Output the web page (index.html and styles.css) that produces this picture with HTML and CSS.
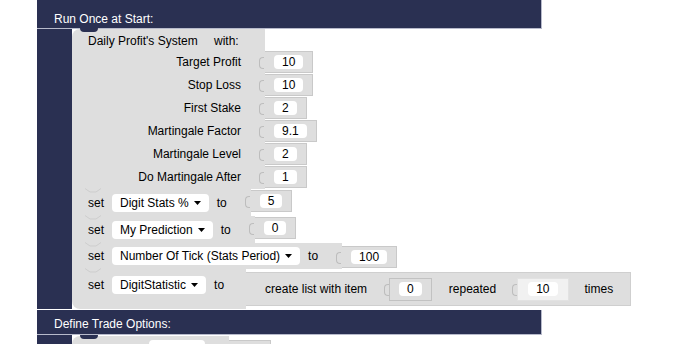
FILE: index.html
```
<!DOCTYPE html>
<html>
<head>
<meta charset="utf-8">
<link rel="stylesheet" href="styles.css">
</head>
<body>
<div class="ws">
  <div class="hat"><span class="hat-text">Run Once at Start:</span></div>
  <div class="mouth">
    <div class="spine"></div>
    <div class="stack">
      <div class="proc">
        <span class="bump"></span>
        <div class="proc-head">Daily Profit's System <span class="with">with:</span></div>
        <div class="arg"><div class="lbl">Target Profit</div><div class="val"><span class="fld">10</span></div></div>
        <div class="arg"><div class="lbl">Stop Loss</div><div class="val"><span class="fld">10</span></div></div>
        <div class="arg"><div class="lbl">First Stake</div><div class="val"><span class="fld">2</span></div></div>
        <div class="arg"><div class="lbl">Martingale Factor</div><div class="val"><span class="fld">9.1</span></div></div>
        <div class="arg"><div class="lbl">Martingale Level</div><div class="val"><span class="fld">2</span></div></div>
        <div class="arg"><div class="lbl">Do Martingale After</div><div class="val"><span class="fld">1</span></div></div>
      </div>

      <div class="set">
        <svg class="notch" width="16" height="5" viewBox="0 0 16 5"><polyline points="0,0.5 5,4 11,4 16,0.5" fill="none" stroke="#cdcdcd" stroke-width="1"/></svg>
        <div class="set-body">
          <span>set</span>
          <span class="pill">Digit Stats %<svg class="arrow" width="7" height="4" viewBox="0 0 7 4"><polygon points="0,0 7,0 3.5,4" fill="#000"/></svg></span>
          <span class="to">to</span>
        </div>
        <div class="val v-set"><span class="fld">5</span></div>
      </div>

      <div class="set">
        <svg class="notch" width="16" height="5" viewBox="0 0 16 5"><polyline points="0,0.5 5,4 11,4 16,0.5" fill="none" stroke="#cdcdcd" stroke-width="1"/></svg>
        <div class="set-body">
          <span>set</span>
          <span class="pill">My Prediction<svg class="arrow" width="7" height="4" viewBox="0 0 7 4"><polygon points="0,0 7,0 3.5,4" fill="#000"/></svg></span>
          <span class="to">to</span>
        </div>
        <div class="val v-set"><span class="fld">0</span></div>
      </div>

      <div class="set">
        <svg class="notch" width="16" height="5" viewBox="0 0 16 5"><polyline points="0,0.5 5,4 11,4 16,0.5" fill="none" stroke="#cdcdcd" stroke-width="1"/></svg>
        <div class="set-body short">
          <span>set</span>
          <span class="pill">Number Of Tick (Stats Period)<svg class="arrow" width="7" height="4" viewBox="0 0 7 4"><polygon points="0,0 7,0 3.5,4" fill="#000"/></svg></span>
          <span class="to">to</span>
        </div>
        <div class="val v-set v-low"><span class="fld">100</span></div>
      </div>

      <div class="set last">
        <svg class="notch" width="16" height="5" viewBox="0 0 16 5"><polyline points="0,0.5 5,4 11,4 16,0.5" fill="none" stroke="#cdcdcd" stroke-width="1"/></svg>
        <div class="set-body tall">
          <span>set</span>
          <span class="pill">DigitStatistic<svg class="arrow" width="7" height="4" viewBox="0 0 7 4"><polygon points="0,0 7,0 3.5,4" fill="#000"/></svg></span>
          <span class="to">to</span>
        </div>
        <div class="create">
          <span>create list with item</span>
          <div class="val v-in"><span class="fld">0</span></div>
          <span class="rep">repeated</span>
          <div class="val v-in v-shadow"><span class="fld">10</span></div>
          <span class="times">times</span>
        </div>
      </div>
    </div>
  </div>
  <div class="hat hat2"><span class="hat-text">Define Trade Options:</span></div>
  <div class="mouth">
    <div class="spine"></div>
    <div class="stack">
      <div class="set next">
        <span class="bump"></span>
        <div class="set-body">
          <span>Duration</span>
          <span class="pill">Ticks<svg class="arrow" width="7" height="4" viewBox="0 0 7 4"><polygon points="0,0 7,0 3.5,4" fill="#000"/></svg></span>
        </div>
        <div class="val v-set"><span class="fld">1</span></div>
      </div>
    </div>
  </div>
</div>
</body>
</html>
```
FILE: styles.css
```
* { box-sizing: border-box; }
body {
  margin: 0;
  background: #fff;
  font-family: "Liberation Sans", Arial, sans-serif;
  font-size: 12px;
  color: #000;
}
.ws {
  padding-left: 37px;
  width: 677px;
  height: 344px;
  overflow: hidden;
}
.hat {
  width: 505px;
  height: 29px;
  background: #2a3052;
  color: #fff;
  padding: 12px 0 0 17px;
  line-height: 14px;
  border-bottom: 1px solid #b7bacb;
  border-right: 1px solid #b7bacb;
}
.hat2 {
  height: 25px;
  padding-top: 7px;
  margin-top: 1px;
}
.mouth {
  display: flex;
}
.spine {
  width: 35px;
  background: #2a3052;
  flex: none;
}
.stack {
  display: flex;
  flex-direction: column;
  align-items: flex-start;
}
.proc {
  position: relative;
}
.bump {
  position: absolute;
  left: 8px;
  top: -1px;
  width: 18px;
  height: 4px;
  background: #2a3052;
  border-radius: 0 0 9px 9px;
}
.proc-head {
  width: 193px;
  height: 22px;
  background: #dedede;
  border-radius: 8px 0 0 0;
  padding: 5px 0 0 16px;
  line-height: 14px;
  white-space: nowrap;
}
.with { margin-left: 13px; }
.arg {
  display: flex;
  height: 23px;
}
.lbl {
  width: 193px;
  background: #dedede;
  text-align: right;
  padding-right: 24px;
  line-height: 23px;
  white-space: nowrap;
}
.val {
  position: relative;
  height: 22px;
  background: #dedede;
  border: 1px solid #c9c9c9;
  border-left: none;
  padding: 0 9px;
  display: flex;
  align-items: center;
  flex: none;
}
.val::before {
  content: "";
  position: absolute;
  left: -6px;
  top: 5px;
  width: 4px;
  height: 10px;
  border: 1px solid #bdbdbd;
  border-right: none;
  border-radius: 4px 0 0 4px;
}
.fld {
  display: block;
  background: #fff;
  border-radius: 4px;
  height: 14px;
  line-height: 14px;
  padding: 0 8px;
  text-align: center;
}
.set {
  display: flex;
  align-items: flex-start;
  position: relative;
}
.notch {
  position: absolute;
  left: 13px;
  top: -1px;
}
.set-body {
  height: 27px;
  background: #dedede;
  display: flex;
  align-items: center;
  padding: 0 24px 0 16px;
  white-space: nowrap;
}
.set-body.short { height: 26px; }
.pill {
  display: flex;
  align-items: center;
  margin-left: 8px;
  height: 18px;
  background: #fff;
  border-radius: 4px;
  padding: 0 8px;
}
.arrow { margin-left: 5px; }
.to { margin-left: 8px; }
.v-set { margin-top: 1px; }
.v-low { margin-top: 3px; height: 22px; }
.last .set-body {
  height: 40px;
  align-items: flex-start;
  padding-top: 7px;
  padding-right: 22px;
  border-radius: 0 0 0 8px;
  line-height: 18px;
}
.create {
  margin-top: 3px;
  height: 34px;
  background: #dedede;
  border: 1px solid #cfcfcf;
  border-left: none;
  display: flex;
  align-items: center;
  padding: 0 17px 0 19px;
  white-space: nowrap;
}
.v-in {
  margin-left: 22px;
  height: 23px;
  border-left: 1px solid #c2c2c2;
  border-color: #c2c2c2;
}
.v-shadow {
  background: #f1f1f1;
  border-color: #e2e2e2;
  padding: 0 10px;
  margin-left: 21px;
}
.rep { margin-left: 17px; }
.times { margin-left: 16px; }
.next .set-body {
  height: 30px;
  align-items: flex-start;
  padding-top: 4px;
  line-height: 18px;
  border-radius: 8px 0 0 0;
}
.next { margin-top: 1px; }
.next .pill { margin-left: 16px; }
.next .v-set { margin-top: 4px; }
```
